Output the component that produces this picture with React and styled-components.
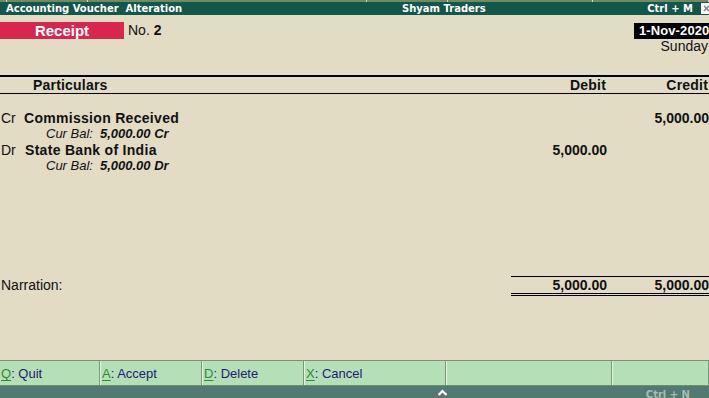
import React from "react";
import styled, { createGlobalStyle } from "styled-components";

const Global = createGlobalStyle`
  html, body { margin: 0; padding: 0; }
  body {
    width: 709px; height: 398px; overflow: hidden;
    background: #e2dcc4;
    font-family: "Liberation Sans", Arial, sans-serif;
    color: #111;
  }
  #root { height: 100%; }
`;

const Screen = styled.div`
  display: flex; flex-direction: column;
  width: 709px; height: 398px; overflow: hidden;
`;

const TopStrip = styled.div`
  display: flex; height: 2px; background: #6e8a66;
`;
const StripSeg = styled.span`
  width: ${p => p.$w}px; flex: ${p => (p.$w ? "none" : "1")};
  border-right: 1px solid #d2d8be; box-sizing: border-box;
`;

const TitleBar = styled.div`
  display: flex; align-items: center; height: 13px;
  background: #12574a; color: #fff;
  font: bold 10px/13px "DejaVu Sans", Verdana, sans-serif;
  white-space: nowrap;
`;
const TitleLeft = styled.div`
  width: 402px; padding-left: 6px; box-sizing: border-box;
`;
const Company = styled.div` flex: 1; `;
const Shortcut = styled.div` margin-right: 8px; `;
const CloseBox = styled.div`
  width: 11px; height: 11px; margin-right: -3px; background: #fff;
  display: flex; align-items: center; justify-content: center;
`;

const Content = styled.div`
  flex: 1; display: flex; flex-direction: column; min-height: 0;
`;

const VoucherHead = styled.div`
  display: flex; align-items: flex-start; padding-top: 7px;
`;
const TypeBadge = styled.div`
  width: 124px; height: 17px; background: #d9264f; color: #fff;
  font-weight: bold; font-size: 15px; line-height: 17px; text-align: center;
`;
const VoucherNo = styled.div`
  margin-left: 4px; font-size: 14px; line-height: 17px;
  b { font-weight: bold; }
`;
const DateBlock = styled.div`
  margin-left: auto; display: flex; flex-direction: column; align-items: flex-end;
`;
const DateBox = styled.div`
  width: 75px; box-sizing: border-box; padding-left: 5px; height: 16px; margin-top: 1px;
  background: #000; color: #fff; white-space: nowrap;
  font-weight: bold; font-size: 13px; line-height: 16px; letter-spacing: 0.1px;
`;
const DayName = styled.div`
  font-size: 14px; line-height: 14px; padding-right: 1px;
`;

const Cols = `
  display: grid; grid-template-columns: 1fr 100px 102px;
`;
const TableHead = styled.div`
  ${Cols}
  margin-top: 22px; height: 16px; line-height: 16px;
  border-top: 2px solid #000; border-bottom: 1px solid #000;
  font-weight: bold; font-size: 14px; letter-spacing: 0.2px;
`;
const HeadCell = styled.div`
  text-align: ${p => (p.$right ? "right" : "left")};
  padding-left: ${p => p.$indent || 0}px;
  padding-right: ${p => p.$pr || 0}px;
  white-space: nowrap;
`;

const Entries = styled.div` padding-top: 16px; `;
const EntryRow = styled.div`
  ${Cols}
  font-size: 14px; line-height: 16px;
`;
const Particular = styled.div` white-space: nowrap; `;
const DrCr = styled.span`
  display: inline-block; width: ${p => p.$w}px; padding-left: 1px;
`;
const Ledger = styled.b` font-weight: bold; letter-spacing: 0.3px; `;
const Amount = styled.div`
  text-align: right; font-weight: bold; white-space: nowrap;
  padding-right: ${p => p.$pr || 0}px;
`;
const BalanceLine = styled.div`
  padding-left: 46px; font-style: italic; font-size: 13px; line-height: 16px;
  b { font-weight: bold; margin-left: 7px; }
`;

const Spacer = styled.div` flex: 1; `;

const TotalsRow = styled.div`
  display: grid; grid-template-columns: 1fr 198px; margin-bottom: 64px;
  font-size: 14px; line-height: 16px;
`;
const NarrationLabel = styled.div` padding-left: 1px; padding-top: 1px; `;
const TotalsBox = styled.div`
  display: grid; grid-template-columns: 96px 102px;
  border-top: 1px solid #000; border-bottom: 3px double #000; height: 16px;
`;

const ButtonBar = styled.div`
  display: flex; height: 24px; background: #b5dfb7;
  border-top: 1px solid #7f8d7d; border-bottom: 1px solid #6f8e6b;
  font-size: 13px; line-height: 25px; color: #1c1c70;
`;
const FKey = styled.div`
  width: ${p => (p.$w ? `${p.$w}px` : "auto")}; flex: ${p => (p.$w ? "none" : "1")};
  box-sizing: border-box; padding-left: ${p => (p.$first ? 1 : 2)}px;
  border-right: 1px solid #7b9877;
  box-shadow: ${p => (p.$first ? "none" : "inset 1px 0 #e6f3e2")};
  white-space: nowrap;
`;
const KeyLetter = styled.span`
  color: #2e8b2e; text-decoration: underline; text-underline-offset: 2px;
`;

const StatusBar = styled.div`
  display: grid; grid-template-columns: 437px 11px 1fr; height: 12px;
  background: #537a72; overflow: hidden;
`;
const Chevron = styled.div`
  display: flex; align-items: flex-start; padding-top: 3px;
`;
const StatusShortcut = styled.div`
  text-align: right; padding-right: 19px; padding-top: 2px;
  font: bold 10px/13px "DejaVu Sans", Verdana, sans-serif; color: #a9bab6;
`;

const keys = [
  { k: "Q", label: "Quit", w: 100, first: true },
  { k: "A", label: "Accept", w: 102 },
  { k: "D", label: "Delete", w: 102 },
  { k: "X", label: "Cancel", w: 142 },
  { w: 166 },
  {},
];

export default function App() {
  return (
    <>
      <Global />
      <Screen>
        <TopStrip>
          <StripSeg $w={7} />
          <StripSeg $w={81} />
          <StripSeg $w={279} />
          <StripSeg $w={81} />
          <StripSeg $w={145} />
          <StripSeg />
        </TopStrip>
        <TitleBar>
          <TitleLeft>Accounting Voucher&nbsp; Alteration</TitleLeft>
          <Company>Shyam Traders</Company>
          <Shortcut>Ctrl + M</Shortcut>
          <CloseBox>
            <svg width="7" height="7" viewBox="0 0 7 7">
              <path d="M1 1L6 6M6 1L1 6" stroke="#8a8a8a" strokeWidth="1.6" />
            </svg>
          </CloseBox>
        </TitleBar>

        <Content>
          <VoucherHead>
            <TypeBadge>Receipt</TypeBadge>
            <VoucherNo>No. <b>2</b></VoucherNo>
            <DateBlock>
              <DateBox>1-Nov-2020</DateBox>
              <DayName>Sunday</DayName>
            </DateBlock>
          </VoucherHead>

          <TableHead>
            <HeadCell $indent={33}>Particulars</HeadCell>
            <HeadCell $right $pr={1}>Debit</HeadCell>
            <HeadCell $right $pr={1}>Credit</HeadCell>
          </TableHead>

          <Entries>
            <EntryRow>
              <Particular><DrCr $w={23}>Cr</DrCr><Ledger>Commission Received</Ledger></Particular>
              <Amount />
              <Amount>5,000.00</Amount>
            </EntryRow>
            <BalanceLine>Cur Bal:<b>5,000.00 Cr</b></BalanceLine>
            <EntryRow>
              <Particular><DrCr $w={24}>Dr</DrCr><Ledger>State Bank of India</Ledger></Particular>
              <Amount>5,000.00</Amount>
              <Amount />
            </EntryRow>
            <BalanceLine>Cur Bal:<b>5,000.00 Dr</b></BalanceLine>
          </Entries>

          <Spacer />

          <TotalsRow>
            <NarrationLabel>Narration:</NarrationLabel>
            <TotalsBox>
              <Amount>5,000.00</Amount>
              <Amount>5,000.00</Amount>
            </TotalsBox>
          </TotalsRow>
        </Content>

        <ButtonBar>
          {keys.map((b, i) => (
            <FKey key={i} $w={b.w} $first={b.first}>
              {b.k && (<><KeyLetter>{b.k}</KeyLetter>: {b.label}</>)}
            </FKey>
          ))}
        </ButtonBar>
        <StatusBar>
          <span />
          <Chevron>
            <svg width="11" height="7" viewBox="0 0 11 7">
              <path d="M1.5 6L5.5 2L9.5 6" stroke="#fff" strokeWidth="2.2" fill="none" />
            </svg>
          </Chevron>
          <StatusShortcut>Ctrl + N</StatusShortcut>
        </StatusBar>
      </Screen>
    </>
  );
}
